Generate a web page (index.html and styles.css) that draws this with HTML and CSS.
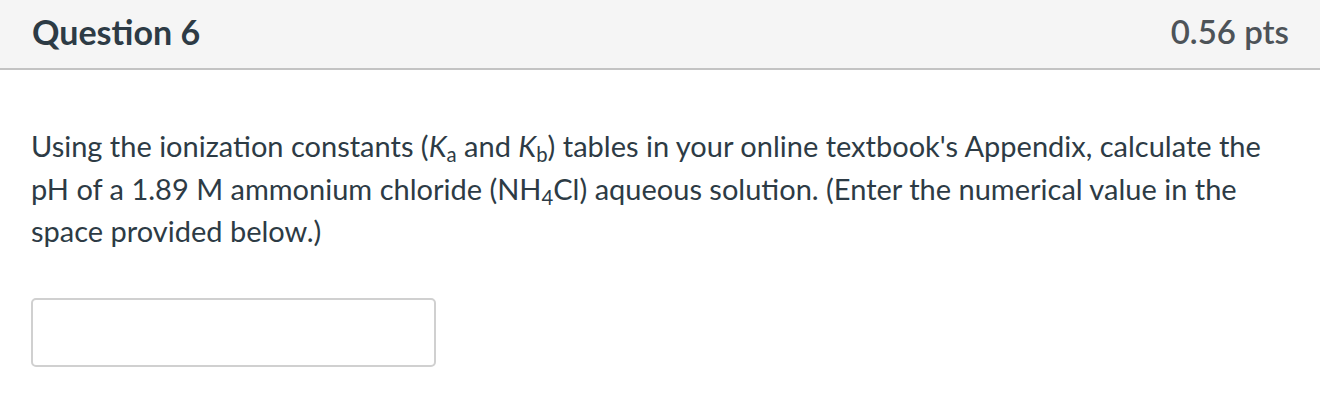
FILE: index.html
```html
<!DOCTYPE html>
<html>
<head>
<meta charset="utf-8">
<link rel="stylesheet" href="styles.css">
</head>
<body>
<div class="question">
  <div class="header">
    <h2 class="title">Question 6</h2>
    <div class="pts">0.56 pts</div>
  </div>
  <div class="content">
    <p class="text">Using the ionization constants (<i>K</i><sub>a</sub> and <i>K</i><sub>b</sub>) tables in your online textbook's Appendix, calculate the pH of a 1.89 M ammonium chloride (NH<sub>4</sub>Cl) aqueous solution. (Enter the numerical value in the space provided below.)</p>
    <input class="answer" type="text">
  </div>
</div>
</body>
</html>
```
FILE: styles.css
```css
html, body { margin: 0; padding: 0; background: #fff; }
body { font-family: Lato, "Noto Sans", sans-serif; color: #2d3b45; }
.question { width: 1320px; }
.header {
  display: flex; justify-content: space-between; align-items: center;
  height: 62px; background: #f5f5f5; border-bottom: 2px solid #c3c3c3;
  padding: 0 31px 6px 32px; box-sizing: content-box;
}
.title { margin: 0; font-size: 34px; font-weight: 700; color: #2d3b45; }
.pts { font-size: 33px; font-weight: 600; color: #4d5358; }
.content { padding: 55px 31px 0 31px; }
.text { margin: 0; font-size: 29px; line-height: 42.5px; width: 1250px; }
.text sub { font-size: 70%; vertical-align: -0.25em; line-height: 0; }
.answer {
  display: block; margin-top: 45px; width: 405px; height: 69px; box-sizing: border-box;
  border: 2px solid #d0d0d0; border-radius: 5px; background: #fff; padding: 0 10px;
  font-family: Lato, sans-serif; font-size: 24px;
}
```
